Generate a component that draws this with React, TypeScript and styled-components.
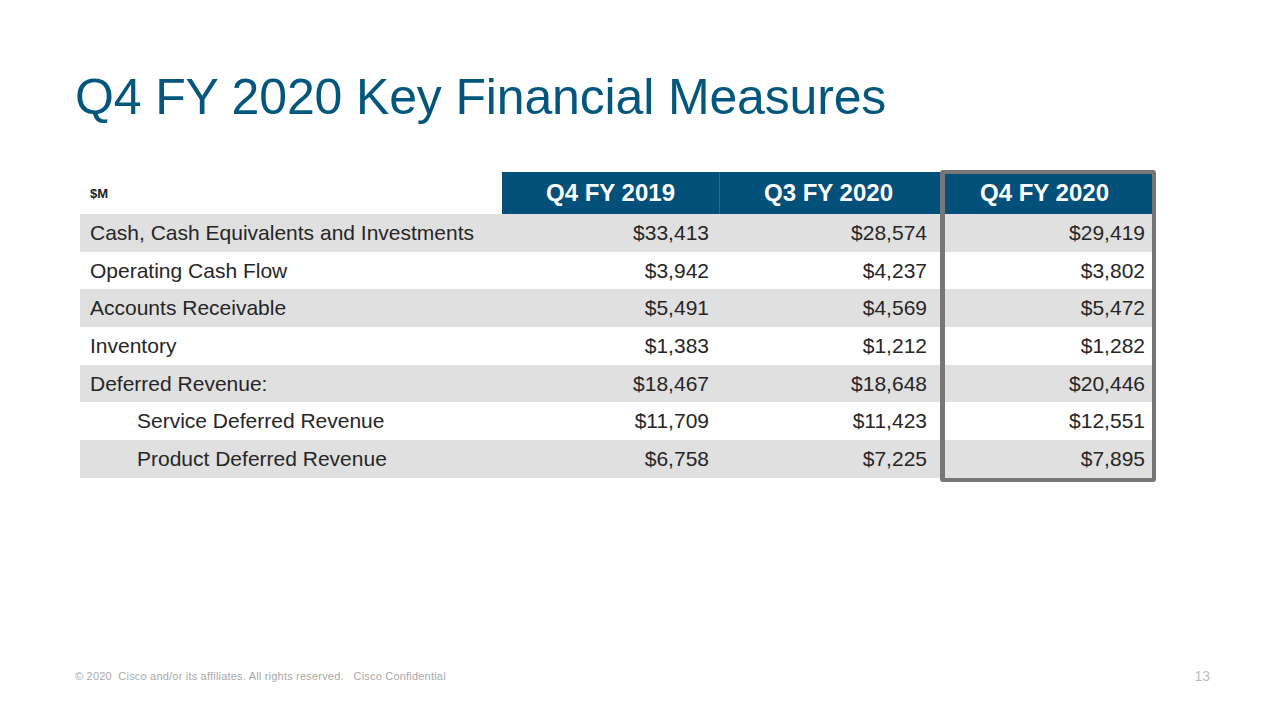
import React from "react";
import styled, { createGlobalStyle } from "styled-components";

const Global = createGlobalStyle`
  html, body { margin: 0; padding: 0; background: #ffffff; }
  body { font-family: "Liberation Sans", Arial, sans-serif; }
`;

const Page = styled.div`
  width: 1280px;
  height: 720px;
  display: flex;
  flex-direction: column;
  background: #ffffff;
  overflow: hidden;
`;

const Title = styled.h1`
  margin: 72px 0 0 75px;
  font-family: "Liberation Sans", Arial, sans-serif;
  font-weight: 400;
  font-size: 50px;
  line-height: 50px;
  color: #03577d;
  letter-spacing: -0.15px;
`;

const TableWrap = styled.div`
  position: relative;
  margin: 50px 0 0 80px;
  width: 1072px;
`;

const Grid = styled.div`
  display: grid;
  grid-template-columns: 422px 217px 218px 215px;
  grid-auto-rows: 37.7px;
  grid-template-rows: 42px;
`;

const UnitCell = styled.div`
  display: flex;
  align-items: center;
  padding-left: 10px;
  font-size: 13px;
  font-weight: 700;
  color: #222;
`;

const HeadCell = styled.div<{ $divider?: boolean }>`
  display: flex;
  align-items: center;
  justify-content: center;
  background: #03507a;
  color: #ffffff;
  font-weight: 700;
  font-size: 24px;
  border-left: ${(p) => (p.$divider ? "1px solid #2a6a8c" : "none")};
`;

const LabelCell = styled.div<{ $shade: boolean; $indent: boolean }>`
  display: flex;
  align-items: center;
  padding-left: ${(p) => (p.$indent ? "57px" : "10px")};
  background: ${(p) => (p.$shade ? "#e0e0e0" : "#ffffff")};
  font-size: 21px;
  color: #262626;
  white-space: nowrap;
`;

const ValueCell = styled.div<{ $shade: boolean; $pad: number }>`
  display: flex;
  align-items: center;
  justify-content: flex-end;
  padding-right: ${(p) => p.$pad}px;
  background: ${(p) => (p.$shade ? "#e0e0e0" : "#ffffff")};
  font-size: 21px;
  color: #262626;
`;

const Highlight = styled.div`
  position: absolute;
  left: 860px;
  top: -2px;
  width: 216px;
  height: 312px;
  box-sizing: border-box;
  border: 4px solid #777777;
  border-left-width: 5px;
  border-radius: 3px;
  pointer-events: none;
`;

const Footer = styled.div`
  margin-top: auto;
  display: flex;
  align-items: center;
  justify-content: space-between;
  height: 20px;
  padding: 0 70px 34px 75px;
`;

const Legal = styled.span`
  font-size: 11px;
  letter-spacing: 0.2px;
  color: #a8a8a8;
  white-space: pre;
`;

const PageNum = styled.span`
  font-size: 14px;
  color: #bdbdbd;
`;

const headers = ["Q4 FY 2019", "Q3 FY 2020", "Q4 FY 2020"];

const rows: { label: string; indent?: boolean; values: string[] }[] = [
  { label: "Cash, Cash Equivalents and Investments", values: ["$33,413", "$28,574", "$29,419"] },
  { label: "Operating Cash Flow", values: ["$3,942", "$4,237", "$3,802"] },
  { label: "Accounts Receivable", values: ["$5,491", "$4,569", "$5,472"] },
  { label: "Inventory", values: ["$1,383", "$1,212", "$1,282"] },
  { label: "Deferred Revenue:", values: ["$18,467", "$18,648", "$20,446"] },
  { label: "Service Deferred Revenue", indent: true, values: ["$11,709", "$11,423", "$12,551"] },
  { label: "Product Deferred Revenue", indent: true, values: ["$6,758", "$7,225", "$7,895"] },
];

const pads = [10, 10, 7];

export default function App() {
  return (
    <Page>
      <Global />
      <Title>Q4 FY 2020 Key Financial Measures</Title>
      <TableWrap>
        <Grid>
          <UnitCell>$M</UnitCell>
          {headers.map((h, i) => (
            <HeadCell key={h + i} $divider={i === 1}>
              {h}
            </HeadCell>
          ))}
          {rows.map((r, ri) => {
            const shade = ri % 2 === 0;
            return (
              <React.Fragment key={r.label}>
                <LabelCell $shade={shade} $indent={!!r.indent}>
                  {r.label}
                </LabelCell>
                {r.values.map((v, vi) => (
                  <ValueCell key={vi} $shade={shade} $pad={pads[vi]}>
                    {v}
                  </ValueCell>
                ))}
              </React.Fragment>
            );
          })}
        </Grid>
        <Highlight />
      </TableWrap>
      <Footer>
        <Legal>{"© 2020  Cisco and/or its affiliates. All rights reserved.   Cisco Confidential"}</Legal>
        <PageNum>13</PageNum>
      </Footer>
    </Page>
  );
}
